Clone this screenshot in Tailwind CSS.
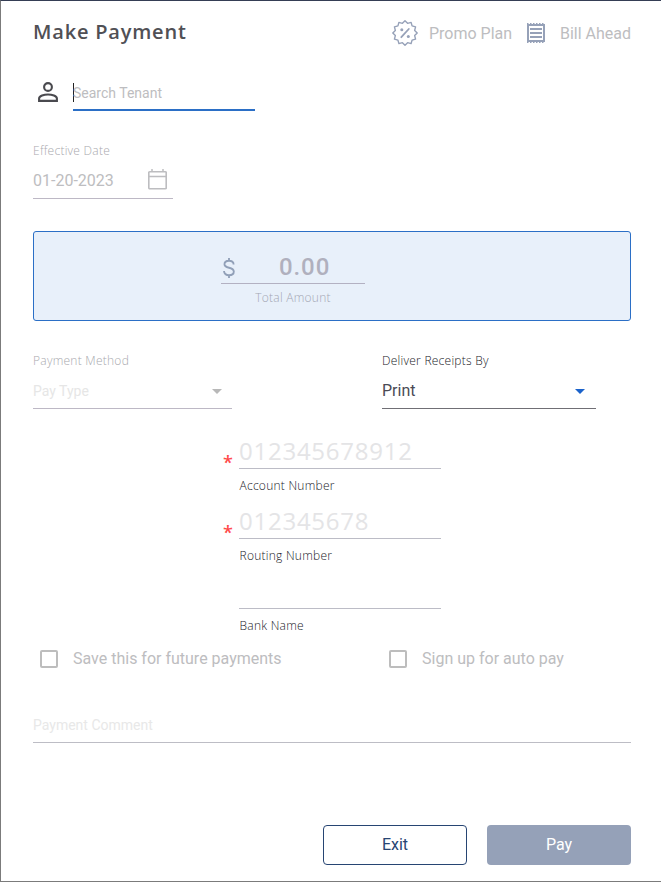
<!DOCTYPE html>
<html lang="en">
<head>
<meta charset="utf-8">
<title>Make Payment</title>
<script src="https://cdn.jsdelivr.net/npm/@tailwindcss/browser@4"></script>
</head>
<body class="bg-white">
<main class="relative flex h-[882px] w-[661px] flex-col overflow-hidden border-t border-b border-l border-t-[#353e55] border-b-[#7b7b7b] border-l-[#7b7b7b] bg-white pr-[30px] pl-8 font-['Roboto',sans-serif] text-[#bdbdc0]">
  <div class="absolute top-0 -left-px h-10 w-px bg-[#152445]"></div>
  <div class="absolute top-[661px] -left-px h-1 w-px bg-[#152445]"></div>

  <header class="flex h-16 items-center justify-between">
    <h1 class="-mt-[2px] font-['Open_Sans',sans-serif] text-[20px] font-semibold tracking-[0.8px] text-[#505055]">Make Payment</h1>
    <div class="flex items-center text-[16px] leading-6">
      <svg class="mr-[11px] h-[26px] w-[26px]" viewBox="0 0 26 26" fill="none" stroke="#96a1b8" stroke-width="1.4" stroke-linejoin="round" stroke-linecap="round">
        <path d="M13 .8L15.59 3.34L19.1 2.43L20.07 5.93L23.57 6.9L22.66 10.41L25.2 13L22.66 15.59L23.57 19.1L20.07 20.07L19.1 23.57L15.59 22.66L13 25.2L10.41 22.66L6.9 23.57L5.93 20.07L2.43 19.1L3.34 15.59L.8 13L3.34 10.41L2.43 6.9L5.93 5.93L6.9 2.43L10.41 3.34Z"/>
        <path d="M9.3 17.2L16.8 9" stroke-width="1.8"/>
        <circle cx="9.8" cy="9.8" r="1.5" fill="#96a1b8" stroke="none"/><circle cx="16.3" cy="16.4" r="1.5" fill="#96a1b8" stroke="none"/>
      </svg>
      <span class="mt-[2px] w-[98px] whitespace-nowrap">Promo Plan</span>
      <svg class="mr-[15px] h-5 w-[18px]" viewBox="0 0 18 20" fill="none">
        <path d="M1 1V19M17 1V19M0 2H18M0 18H18" stroke="#96a1b8" stroke-width="2"/>
        <path d="M0 .5H18M0 19.5H18" stroke="#96a1b8" stroke-dasharray="1.5 1.5"/>
        <path d="M3 6H15M3 10H15M3 14H15" stroke="#96a1b8" stroke-width="2"/>
      </svg>
      <span class="mt-[2px] w-[71px] whitespace-nowrap">Bill Ahead</span>
    </div>
  </header>

  <div class="flex h-[46px] items-end">
    <svg class="mr-[15px] mb-[9px] ml-[5px] h-5 w-5" viewBox="0 0 20 20" fill="none" stroke="#4a4a4f" stroke-width="2.1">
      <circle cx="10" cy="5" r="3.9"/><path d="M1.1 18.9V16.5C1.1 14 6 12.5 10 12.5S18.9 14 18.9 16.5V18.9Z"/>
    </svg>
    <div class="flex h-[30px] w-[182px] items-start border-b-2 border-[#2b6fc6] text-[14px] leading-6">
      <span class="mt-[2px] h-[19px] w-px bg-[#222]"></span><span class="-ml-px">Search Tenant</span>
    </div>
  </div>

  <section class="mt-8 h-[56px] w-[140px] border-b border-[#bdb8c5]">
    <div class="font-['Open_Sans',sans-serif] text-[12px] leading-4 font-light tracking-[0.25px] text-[#a9a9ae]">Effective Date</div>
    <div class="mt-2 flex h-6 items-center justify-between pr-[6px]">
      <span class="mt-[3px] text-[16px] leading-6">01-20-2023</span>
      <svg class="mt-px h-[21px] w-[19px]" viewBox="0 0 19 21" fill="none" stroke="#bdbdc0">
        <rect x=".75" y="2.75" width="17.5" height="17" rx="1" stroke-width="1.7"/><path d="M1 7.5H18M4 0V3M15 0V3" stroke-width="1.5"/>
      </svg>
    </div>
  </section>

  <section class="mt-8 flex h-[90px] shrink-0 flex-col items-start rounded-[3px] border border-[#2b6fc6] bg-[#e8f0fa] pt-[19px] pl-[187px]">
    <div class="flex h-[33px] w-[144px] items-start border-b border-[#b3b1c2]">
      <svg class="mt-[7px] ml-[2px] h-5 w-3" viewBox="0 0 13 20" preserveAspectRatio="none" fill="none" stroke="#91a0b8" stroke-width="2">
        <path d="M6.5 0V3M6.5 17V20M11.5 6.4C11.5 4 9.3 2.8 6.5 2.8C3.8 2.8 1.6 4.1 1.6 6.3C1.6 11 11.7 8.4 11.7 13.5C11.7 15.9 9.4 17.2 6.5 17.2C3.4 17.2 1.1 15.7 1.1 13.1"/>
      </svg>
      <span class="ml-[44px] text-[24px] leading-8 font-medium tracking-[0.9px] text-[#b0b0be]">0.00</span>
    </div>
    <div class="mt-[6px] w-[144px] text-center font-['Open_Sans',sans-serif] text-[12px] leading-4 font-light tracking-[0.25px] text-[#a4a7b4]">Total Amount</div>
  </section>

  <div class="mt-8 flex h-[56px] shrink-0">
    <section class="mr-[150px] w-[199px] border-b border-[#bdb8c5]">
      <div class="font-['Open_Sans',sans-serif] text-[12px] leading-4 font-light tracking-[0.25px] text-[#a9a9ae]">Payment Method</div>
      <div class="mt-[10px] flex h-6 items-center justify-between pr-[10px] text-[14px] text-[#e6e6e6]">Pay Type
        <svg class="h-[5px] w-[10px]" viewBox="0 0 10 5"><path d="M0 0H10L5 5Z" fill="#b8b8b8"/></svg>
      </div>
    </section>
    <section class="w-[214px] border-b border-[#706f75] text-[#4a4a55]">
      <div class="font-['Open_Sans',sans-serif] text-[12px] leading-4 font-light tracking-[0.25px] text-[#222228]">Deliver Receipts By</div>
      <div class="mt-[10px] flex h-6 items-center justify-between pr-[11px] text-[16px]"><span class="-mt-px">Print</span>
        <svg class="h-[5px] w-[10px]" viewBox="0 0 10 5"><path d="M0 0H10L5 5Z" fill="#1b63cb"/></svg>
      </div>
    </section>
  </div>

  <div class="mt-[25px] ml-[190px] flex flex-col font-['Open_Sans',sans-serif] text-[12px] font-light tracking-[0.25px] text-[#222228]">
    <div class="flex h-[70px]">
      <span class="w-4 pt-[16px] text-[18px] leading-6 font-semibold text-[#ff4a4a]">*</span>
      <div class="w-[202px]"><div class="h-[35px] border-b border-[#bcbcc6] text-[24px] leading-[33px] font-medium tracking-[0.75px] text-[#e4e4e6]">012345678912</div><div class="mt-[9px] pl-[0.5px] leading-4">Account Number</div></div>
    </div>
    <div class="flex h-[70px]">
      <span class="w-4 pt-[16px] text-[18px] leading-6 font-semibold text-[#ff4a4a]">*</span>
      <div class="w-[202px]"><div class="h-[35px] border-b border-[#bcbcc6] text-[24px] leading-[33px] font-medium tracking-[0.75px] text-[#e4e4e6]">012345678</div><div class="mt-[9px] pl-[0.5px] leading-4">Routing Number</div></div>
    </div>
    <div class="ml-4 h-[70px] w-[202px]"><div class="h-[35px] border-b border-[#bcbcc6]"></div><div class="mt-[9px] pl-[0.5px] leading-4">Bank Name</div></div>
  </div>

  <div class="mt-[3px] flex h-6 items-center text-[16px] leading-6">
    <span class="mr-[15px] ml-[7px] h-[18px] w-[18px] rounded-[2px] border-2 border-[#bdbdbd]"></span>
    <span class="w-[309px]">Save this for future payments</span>
    <span class="mr-[15px] ml-[7px] h-[18px] w-[18px] rounded-[2px] border-2 border-[#bdbdbd]"></span>
    <span>Sign up for auto pay</span>
  </div>

  <div class="mt-[42px] h-[30px] border-b border-[#bdbdc5] text-[14px] leading-6 text-[#e8e8e8]">Payment Comment</div>

  <footer class="mt-[82px] flex justify-end gap-5 text-[16px]">
    <button class="h-10 w-36 rounded-[4px] border border-[#274573] text-[#274573]">Exit</button>
    <button class="h-10 w-36 rounded-[4px] bg-[#95a1b8] text-white">Pay</button>
  </footer>
</main>
</body>
</html>
